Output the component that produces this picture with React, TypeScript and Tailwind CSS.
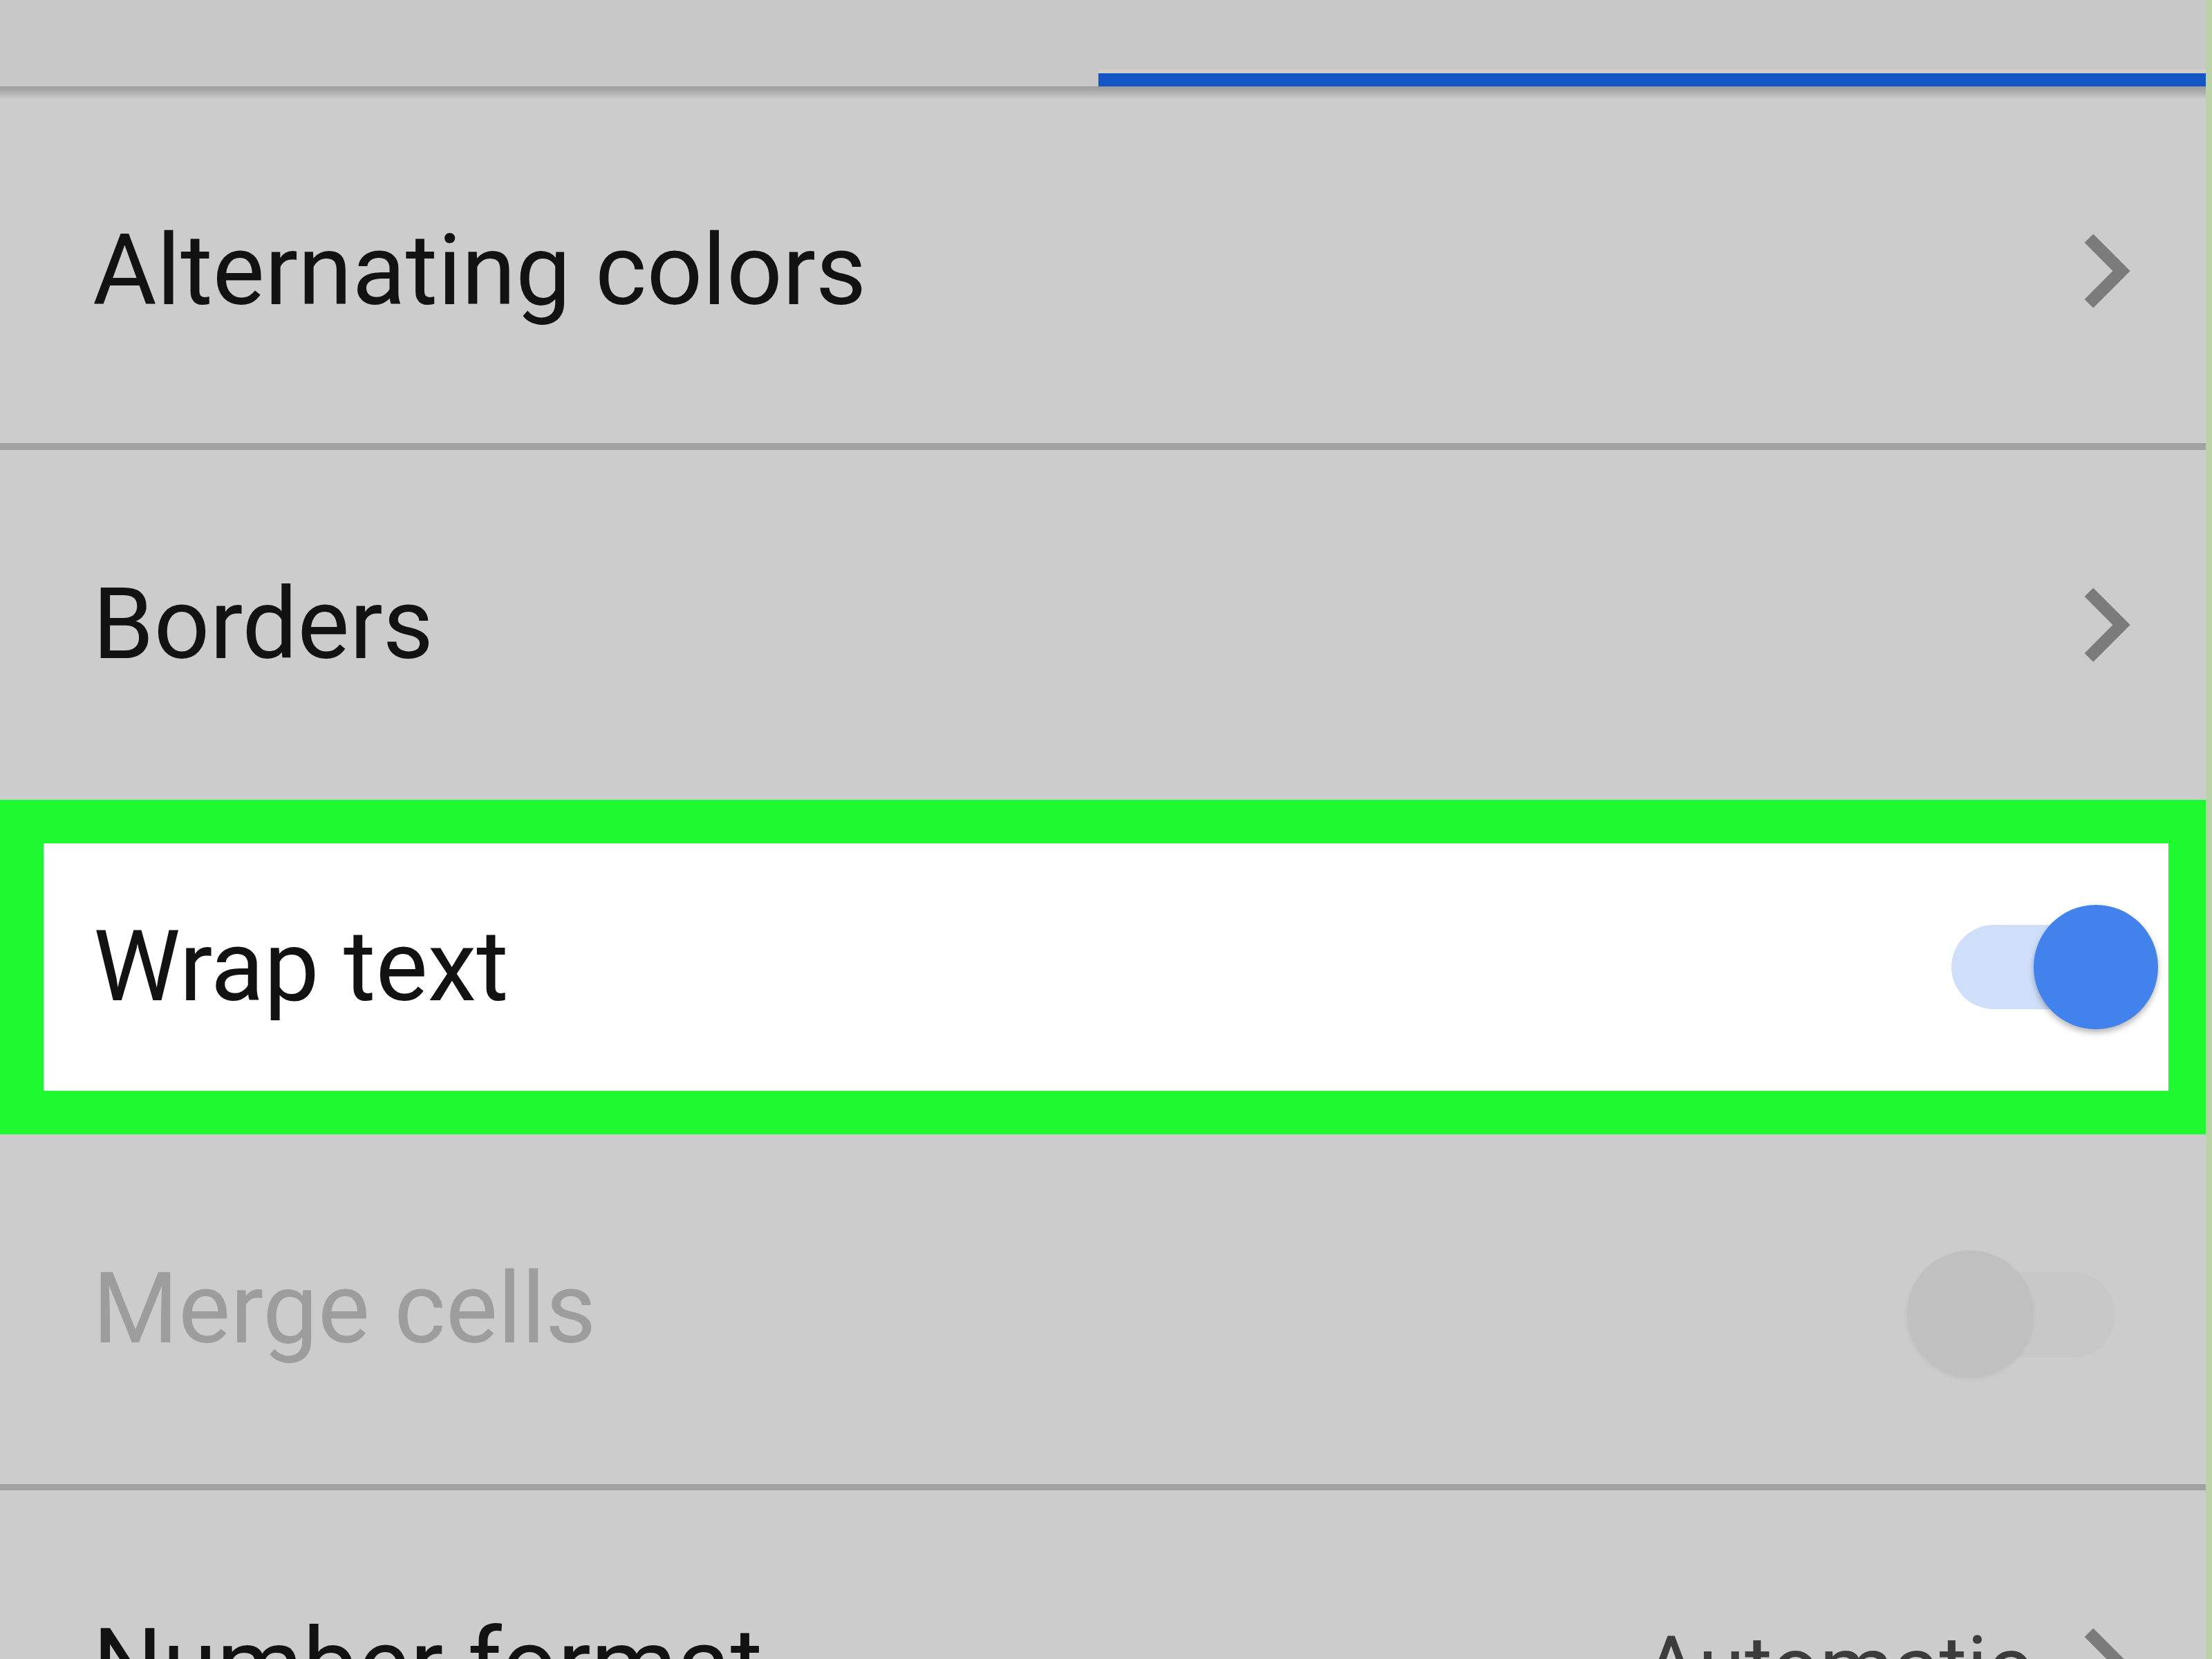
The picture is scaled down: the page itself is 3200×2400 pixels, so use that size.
const Chevron = ({ className = "" }: { className?: string }) => (
  <svg viewBox="0 0 24 24" className={`w-[214px] h-[214px] shrink-0 ${className}`} fill="#7b7b7b">
    <path d="M10 6L8.59 7.41 13.17 12l-4.58 4.59L10 18l6-6z" />
  </svg>
);

const ToggleOn = () => (
  <div className="relative w-[300px] h-[182px] flex items-center">
    <div className="w-[296px] h-[122px] rounded-full bg-[#cfdffa]" />
    <div className="absolute left-[119px] top-[1px] w-[180px] h-[180px] rounded-full bg-[#4282ec] shadow-[0_5px_8px_rgba(0,0,0,0.28)]" />
  </div>
);

const ToggleOff = () => (
  <div className="relative w-[300px] h-[184px] flex items-center mt-[14px]">
    <div className="ml-[4px] w-[296px] h-[122px] rounded-full bg-[#c8c8c8] shadow-[0_1px_3px_rgba(0,0,0,0.04)]" />
    <div className="absolute left-0 top-0 w-[182px] h-[182px] rounded-full bg-[#c0c0c0] shadow-[0_3px_6px_rgba(0,0,0,0.08)]" />
  </div>
);

const Divider = ({ h }: { h: string }) => <div className={`w-full shrink-0 bg-[#a2a2a2] ${h}`} />;

export default function App() {
  return (
    <div className="w-[3200px] h-[2400px] overflow-hidden bg-[#cccccc] border-r-[9px] border-[#b9d2a6] flex flex-col font-[Roboto,sans-serif] text-[142px] leading-none text-[#121212]">
      {/* tabs */}
      <div className="h-[125px] shrink-0 bg-[#c7c7c7] flex items-end">
        <div className="w-[1589px]" />
        <div className="flex-1 flex flex-col">
          <div className="h-[6px] bg-[#d1cec7]" />
          <div className="h-[19px] bg-[#1556c7]" />
        </div>
      </div>
      <div className="h-[18px] shrink-0 bg-linear-to-b from-[#9c9c9c] via-[#b0b0b0] to-[#cccccc]" />

      <div className="h-[498px] shrink-0 flex items-center justify-between pl-[134px] pr-[38px]">
        <span>Alternating colors</span>
        <Chevron />
      </div>
      <Divider h="h-[10px]" />

      <div className="h-[506px] shrink-0 flex items-center justify-between pl-[134px] pr-[38px]">
        <span>Borders</span>
        <Chevron />
      </div>

      <div className="h-[484px] shrink-0 mr-[-9px] bg-[#1ff92f] p-[63px] flex">
        <div className="flex-1 bg-white flex items-center justify-between pl-[72px] pr-[14px]">
          <span>Wrap text</span>
          <ToggleOn />
        </div>
      </div>

      <div className="h-[506px] shrink-0 flex items-center justify-between pl-[134px] pr-[132px] text-[#9d9d9d]">
        <span>Merge cells</span>
        <ToggleOff />
      </div>
      <Divider h="h-[9px]" />

      <div className="h-[506px] shrink-0 flex items-center justify-between pl-[134px] pr-[38px]">
        <span>Number format</span>
        <div className="flex items-center">
          <span className="text-[122px] text-[#3c3c3c] mt-[8px]">Automatic</span>
          <Chevron />
        </div>
      </div>
    </div>
  );
}
